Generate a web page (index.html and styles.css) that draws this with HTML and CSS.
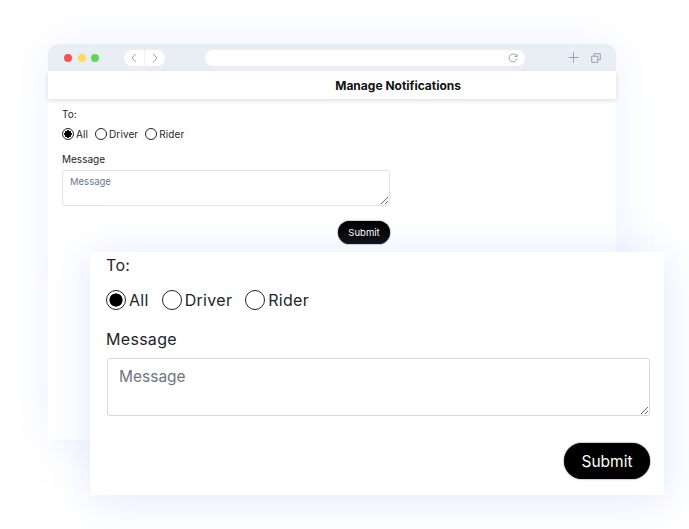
FILE: index.html
```html
<!DOCTYPE html>
<html lang="en">
<head>
<meta charset="utf-8">
<title>Manage Notifications</title>
<link rel="stylesheet" href="styles.css">
</head>
<body>
<div class="stage">
  <section class="window">
    <div class="toolbar">
      <div class="lights"><i class="dot red"></i><i class="dot yellow"></i><i class="dot green"></i></div>
      <div class="nav">
        <span class="nav-btn"><svg width="6" height="10" viewBox="0 0 6 10"><path d="M5 .8 1 5l4 4.2" class="ic"/></svg></span>
        <span class="nav-btn"><svg width="6" height="10" viewBox="0 0 6 10"><path d="M1 .8 5 5 1 9.200" class="ic"/></svg></span>
      </div>
      <div class="address">
        <svg width="10" height="10" viewBox="0 0 10 10"><path d="M8.700 3.300A4 4 0 1 0 9 5.600M9 1v2.500H6.600" class="ic"/></svg>
      </div>
      <div class="actions">
        <svg width="11" height="11" viewBox="0 0 11 11"><path d="M5.500.5v10M.5 5.500h10" class="ic"/></svg>
        <svg width="10" height="10" viewBox="0 0 10 10"><path d="M.7 3.200h6.100v6.100H.7zM3 3.200V.7h6.300v6.100H6.800" class="ic"/></svg>
      </div>
    </div>
    <header class="page-head"><h1>Manage Notifications</h1></header>
    <form class="form small">
      <p class="label to">To:</p>
      <div class="radios">
        <label class="radio"><input type="radio" name="a" checked>All</label>
        <label class="radio"><input type="radio" name="a">Driver</label>
        <label class="radio"><input type="radio" name="a">Rider</label>
      </div>
      <p class="label msg">Message</p>
      <textarea placeholder="Message"></textarea>
      <div class="submit-row"><button type="button">Submit</button></div>
    </form>
  </section>
  <section class="zoom-card">
    <form class="form large">
      <p class="label to">To:</p>
      <div class="radios">
        <label class="radio"><input type="radio" name="b" checked>All</label>
        <label class="radio"><input type="radio" name="b">Driver</label>
        <label class="radio"><input type="radio" name="b">Rider</label>
      </div>
      <p class="label msg">Message</p>
      <textarea placeholder="Message"></textarea>
      <div class="submit-row"><button type="button">Submit</button></div>
    </form>
  </section>
</div>
</body>
</html>
```
FILE: styles.css
```css
* { box-sizing: border-box; }
html, body { margin: 0; height: 100%; background: #fff; overflow: hidden; }
body { font-family: Inter, "Liberation Sans", sans-serif; color: #212529; }
.stage { position: relative; width: 689px; height: 529px; overflow: hidden; }
.window {
  position: absolute; left: 48px; top: 44px; width: 568px; height: 396px;
  background: #fff; border-radius: 10px 10px 0 0;
  box-shadow: 0 0 45px rgba(196, 206, 255, .28);
}
.toolbar {
  height: 27px; background: #e9edf4; border-radius: 10px 10px 0 0;
  display: flex; align-items: center; padding-left: 16px;
}
.lights { display: flex; gap: 5.500px; width: 60px; }
.dot { width: 8px; height: 8px; border-radius: 50%; }
.red { background: #fc5050; }
.yellow { background: #fed95f; }
.green { background: #5fd85a; }
.nav {
  display: flex; width: 41px; height: 16px; background: #fff; border-radius: 8px;
}
.nav-btn { flex: 1; display: flex; align-items: center; justify-content: center; }
.nav-btn + .nav-btn { border-left: 1px solid #eef0f5; }
.ic { fill: none; stroke: #9aa1ad; stroke-width: 1; }
.address {
  margin-left: 40px; width: 320px; height: 16px; background: #fff; border-radius: 8px;
  display: flex; align-items: center; justify-content: flex-end; padding-right: 7px;
}
.actions { margin-left: 43px; display: flex; align-items: center; gap: 12px; }
.page-head {
  height: 28px; display: flex; align-items: center; justify-content: flex-end;
  padding-right: 155px; background: #fff;
  box-shadow: 0 2px 4px rgba(0, 0, 0, .12);
  position: relative;
}
h1 { margin: 0; font-size: 12px; font-weight: 700; color: #111; white-space: nowrap; }
.label, .radio { color: #212529; }
.form p { margin: 0; }
.radios { display: flex; }
.radio { display: flex; align-items: center; }
.radio input {
  margin: 0; appearance: none; border-radius: 50%; border: 1px solid #222; background: #fff;
}
.radio input:checked { background: radial-gradient(circle closest-side, #000 0 70%, #fff 76%); }
textarea {
  display: block; width: 100%; background: #fff; border: 1px solid #d6d8dc; border-radius: 3px;
  font-family: inherit; outline: none; resize: vertical; margin: 0;
}
textarea::placeholder { color: #6c757d; opacity: 1; }
.submit-row { display: flex; justify-content: flex-end; }
button {
  background: #000; color: #fff; border: 0; font-family: inherit; padding: 0;
  box-shadow: 0 0 1.500px rgba(0, 0, 0, .9);
}
.small { padding: 8px 226px 0 14px; font-size: 10px; }
.small .label { line-height: 14px; }
.small .radios { margin-top: 6px; gap: 7px; height: 14px; }
.small .radio { gap: 2px; line-height: 14px; letter-spacing: .1px; }
.small .radio input { width: 12px; height: 12px; }
.small .msg { margin-top: 11px; }
.small textarea { margin-top: 4px; height: 36px; padding: 5px 7px; font-size: 9.500px; border-color: #e0e2e6; }
.small textarea::placeholder { color: #667a92; }
.small .submit-row { margin-top: 15px; }
.small button { width: 52px; height: 23px; border-radius: 12px; font-size: 9.500px; }
.zoom-card {
  position: absolute; left: 90px; top: 252px; width: 574px; height: 243px;
  background: #fff; box-shadow: 0 4px 40px rgba(180, 195, 255, .38);
}
.large { padding: 3px 14px 0 17px; font-size: 16px; }
.large .label { line-height: 20px; letter-spacing: .3px; margin-left: -1px; }
.large .radios { margin-top: 13px; margin-left: -1px; gap: 13px; height: 24px; }
.large .radio { gap: 3px; line-height: 24px; letter-spacing: .3px; }
.large .radio input { width: 20px; height: 20px; border-width: 1.500px; }
.large .msg { margin-top: 15px; line-height: 24px; }
.large textarea { margin-top: 7px; height: 58px; padding: 8px 11px; font-size: 15.500px; }
.large .submit-row { margin-top: 27px; }
.large button { width: 86px; height: 36px; border-radius: 18px; font-size: 15.500px; }
```
